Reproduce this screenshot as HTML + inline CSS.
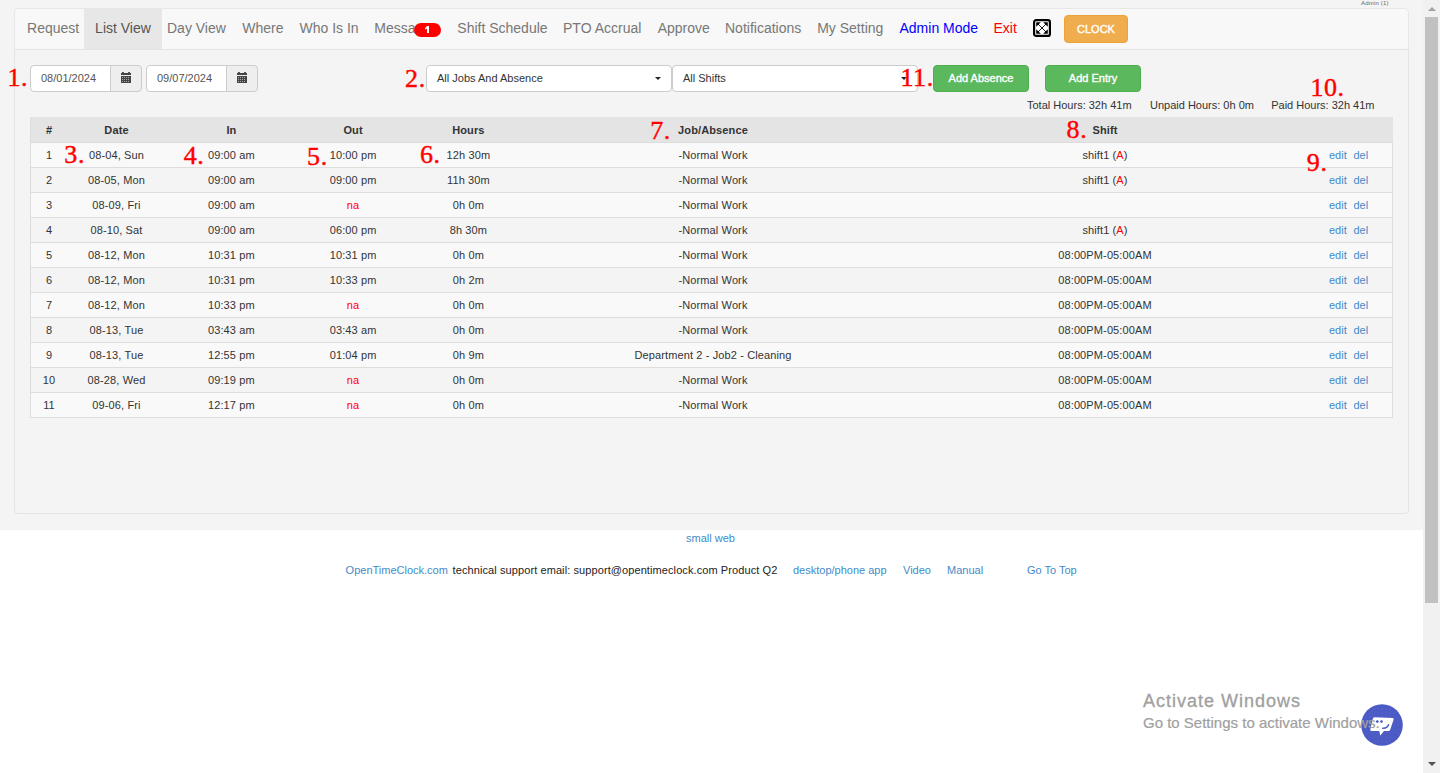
<!DOCTYPE html><html><head><meta charset="utf-8"><style>

html,body{margin:0;padding:0;}
body{width:1440px;height:773px;overflow:hidden;position:relative;background:#fff;font-family:"Liberation Sans", sans-serif;color:#333;}
.abs{position:absolute;white-space:nowrap;}
.gray{position:absolute;left:0;top:0;width:1423px;height:530px;background:#f4f4f4;}
.nav{position:absolute;left:14px;top:8px;width:1393px;height:40px;background:#f8f8f8;border:1px solid #e7e7e7;border-radius:4px 4px 1px 1px;}
.panel{position:absolute;left:14px;top:49px;width:1393px;height:463px;background:#f4f4f4;border:1px solid #e3e3e3;border-radius:2px 2px 4px 4px;}
.nt{position:absolute;top:18px;font-size:14px;line-height:20px;color:#777;white-space:nowrap;}
.t11{position:absolute;font-size:11px;line-height:15px;white-space:nowrap;}
.ann{position:absolute;font-family:"Liberation Serif", serif;font-weight:normal;color:#ff0000;font-size:26px;line-height:26px;letter-spacing:0.6px;white-space:nowrap;-webkit-text-stroke:0.45px #ff0000;text-shadow:0 0 1px #fff,0 0 1px #fff;}
.inp{position:absolute;background:#fff;border:1px solid #ccc;box-sizing:border-box;}
.c{position:absolute;width:300px;text-align:center;font-size:11px;line-height:15px;white-space:nowrap;letter-spacing:0.12px;}

</style></head><body>
<div class="gray"></div>
<div class="abs" style="left:1361px;top:-1px;font-size:6px;line-height:8px;letter-spacing:0.2px;color:#666;">Admin (1)</div>
<div class="nav"></div>
<div class="abs" style="left:84px;top:9px;width:78px;height:40px;background:#e7e7e7;"></div>
<div class="nt" style="left:27.1px;color:#777">Request</div>
<div class="nt" style="left:95.1px;color:#555">List View</div>
<div class="nt" style="left:167.0px;color:#777">Day View</div>
<div class="nt" style="left:242.3px;color:#777">Where</div>
<div class="nt" style="left:299.5px;color:#777">Who Is In</div>
<div class="nt" style="left:374.3px;color:#777">Messa</div>
<div class="nt" style="left:457.3px;color:#777">Shift Schedule</div>
<div class="nt" style="left:563.0px;color:#777">PTO Accrual</div>
<div class="nt" style="left:657.7px;color:#777">Approve</div>
<div class="nt" style="left:725.0px;color:#777">Notifications</div>
<div class="nt" style="left:817.2px;color:#777">My Setting</div>
<div class="nt" style="left:899.5px;color:#0000ff">Admin Mode</div>
<div class="nt" style="left:993.5px;color:#ff0000">Exit</div>
<div class="abs" style="left:414px;top:23px;width:27px;height:14px;border-radius:7px;background:#ff0000;"></div>
<svg class="abs" style="left:424px;top:25px" width="6" height="9" viewBox="0 0 6 9"><rect x="3" y="1" width="2" height="7" fill="#fff"/><path d="M0.9 3.6 L3 1 L3.6 1 L3.6 3 L1.6 4.4 Z" fill="#fff"/></svg>
<svg class="abs" style="left:1032px;top:18px" width="20" height="20" viewBox="0 0 20 20">
<rect x="2.1" y="2.1" width="15.8" height="15.8" rx="2" ry="2" fill="#fff" stroke="#000" stroke-width="2.2"/>
<path d="M4.2 4.2h4.6l-4.6 4.6z M15.8 4.2h-4.6l4.6 4.6z M4.2 15.8h4.6l-4.6-4.6z M15.8 15.8h-4.6l4.6-4.6z" fill="#000"/>
<path d="M5.5 5.5L14.5 14.5M14.5 5.5L5.5 14.5" stroke="#000" stroke-width="0.9"/>
</svg>
<div class="abs" style="left:1064px;top:15px;width:64px;height:28px;box-sizing:border-box;background:#f0ad4e;border:1px solid #eea236;border-radius:4px;color:#fff;font-size:11px;line-height:26px;text-align:center;-webkit-text-stroke:0.35px #fff;">CLOCK</div>
<div class="panel"></div>
<div class="inp" style="left:30px;top:65px;width:81px;height:27px;border-radius:4px 0 0 4px;"></div>
<div class="inp" style="left:110px;top:65px;width:32px;height:27px;background:#eee;border-radius:0 4px 4px 0;"></div>
<div class="t11" style="left:41px;top:71px;color:#555;">08/01/2024</div>
<svg class="abs" style="left:121px;top:72px" width="10" height="11" viewBox="0 0 10 11" shape-rendering="crispEdges"><rect x="1" y="0" width="2" height="1" fill="#555"/><rect x="7" y="0" width="2" height="1" fill="#555"/><rect x="0" y="1" width="10" height="2" fill="#444"/><rect x="0" y="4" width="10" height="7" fill="#444"/><g fill="#a8a8a8"><rect x="1" y="5" width="1" height="1"/><rect x="1" y="7" width="1" height="1"/><rect x="1" y="9" width="1" height="1"/><rect x="3" y="5" width="1" height="1"/><rect x="3" y="7" width="1" height="1"/><rect x="3" y="9" width="1" height="1"/><rect x="5" y="5" width="1" height="1"/><rect x="5" y="7" width="1" height="1"/><rect x="5" y="9" width="1" height="1"/><rect x="7" y="5" width="1" height="1"/><rect x="7" y="7" width="1" height="1"/><rect x="7" y="9" width="1" height="1"/></g></svg>
<div class="inp" style="left:146px;top:65px;width:81px;height:27px;border-radius:4px 0 0 4px;"></div>
<div class="inp" style="left:226px;top:65px;width:32px;height:27px;background:#eee;border-radius:0 4px 4px 0;"></div>
<div class="t11" style="left:157px;top:71px;color:#555;">09/07/2024</div>
<svg class="abs" style="left:237px;top:72px" width="10" height="11" viewBox="0 0 10 11" shape-rendering="crispEdges"><rect x="1" y="0" width="2" height="1" fill="#555"/><rect x="7" y="0" width="2" height="1" fill="#555"/><rect x="0" y="1" width="10" height="2" fill="#444"/><rect x="0" y="4" width="10" height="7" fill="#444"/><g fill="#a8a8a8"><rect x="1" y="5" width="1" height="1"/><rect x="1" y="7" width="1" height="1"/><rect x="1" y="9" width="1" height="1"/><rect x="3" y="5" width="1" height="1"/><rect x="3" y="7" width="1" height="1"/><rect x="3" y="9" width="1" height="1"/><rect x="5" y="5" width="1" height="1"/><rect x="5" y="7" width="1" height="1"/><rect x="5" y="9" width="1" height="1"/><rect x="7" y="5" width="1" height="1"/><rect x="7" y="7" width="1" height="1"/><rect x="7" y="9" width="1" height="1"/></g></svg>
<div class="inp" style="left:426px;top:65px;width:246px;height:27px;border-radius:4px;"></div>
<div class="t11" style="left:437px;top:71px;color:#333;">All Jobs And Absence</div>
<div class="abs" style="left:655px;top:77px;width:0;height:0;border-left:3px solid transparent;border-right:3px solid transparent;border-top:3px solid #222;"></div>
<div class="inp" style="left:672px;top:65px;width:246px;height:27px;border-radius:4px;"></div>
<div class="t11" style="left:683px;top:71px;color:#333;">All Shifts</div>
<div class="abs" style="left:901px;top:77px;width:0;height:0;border-left:3px solid transparent;border-right:3px solid transparent;border-top:3px solid #222;"></div>
<div class="abs" style="left:933px;top:65px;width:96px;height:27px;box-sizing:border-box;background:#5cb85c;border:1px solid #4cae4c;border-radius:4px;color:#fff;font-size:11px;line-height:25px;text-align:center;-webkit-text-stroke:0.35px #fff;">Add Absence</div>
<div class="abs" style="left:1045px;top:65px;width:96px;height:27px;box-sizing:border-box;background:#5cb85c;border:1px solid #4cae4c;border-radius:4px;color:#fff;font-size:11px;line-height:25px;text-align:center;-webkit-text-stroke:0.35px #fff;">Add Entry</div>
<div class="t11" style="left:1027px;top:98px;">Total Hours: 32h 41m</div>
<div class="t11" style="left:1150px;top:98px;">Unpaid Hours: 0h 0m</div>
<div class="t11" style="left:1271.2px;top:98px;">Paid Hours: 32h 41m</div>
<div class="abs" style="left:30px;top:117px;width:1363px;height:25px;background:#e4e4e4;"></div>
<div class="abs" style="left:30px;top:142px;width:1363px;height:25px;box-sizing:border-box;border-top:1px solid #ddd;border-left:1px solid #ddd;border-right:1px solid #ddd;background:#f9f9f9;"></div>
<div class="abs" style="left:30px;top:167px;width:1363px;height:25px;box-sizing:border-box;border-top:1px solid #ddd;border-left:1px solid #ddd;border-right:1px solid #ddd;background:#f4f4f4;"></div>
<div class="abs" style="left:30px;top:192px;width:1363px;height:25px;box-sizing:border-box;border-top:1px solid #ddd;border-left:1px solid #ddd;border-right:1px solid #ddd;background:#f9f9f9;"></div>
<div class="abs" style="left:30px;top:217px;width:1363px;height:25px;box-sizing:border-box;border-top:1px solid #ddd;border-left:1px solid #ddd;border-right:1px solid #ddd;background:#f4f4f4;"></div>
<div class="abs" style="left:30px;top:242px;width:1363px;height:25px;box-sizing:border-box;border-top:1px solid #ddd;border-left:1px solid #ddd;border-right:1px solid #ddd;background:#f9f9f9;"></div>
<div class="abs" style="left:30px;top:267px;width:1363px;height:25px;box-sizing:border-box;border-top:1px solid #ddd;border-left:1px solid #ddd;border-right:1px solid #ddd;background:#f4f4f4;"></div>
<div class="abs" style="left:30px;top:292px;width:1363px;height:25px;box-sizing:border-box;border-top:1px solid #ddd;border-left:1px solid #ddd;border-right:1px solid #ddd;background:#f9f9f9;"></div>
<div class="abs" style="left:30px;top:317px;width:1363px;height:25px;box-sizing:border-box;border-top:1px solid #ddd;border-left:1px solid #ddd;border-right:1px solid #ddd;background:#f4f4f4;"></div>
<div class="abs" style="left:30px;top:342px;width:1363px;height:25px;box-sizing:border-box;border-top:1px solid #ddd;border-left:1px solid #ddd;border-right:1px solid #ddd;background:#f9f9f9;"></div>
<div class="abs" style="left:30px;top:367px;width:1363px;height:25px;box-sizing:border-box;border-top:1px solid #ddd;border-left:1px solid #ddd;border-right:1px solid #ddd;background:#f4f4f4;"></div>
<div class="abs" style="left:30px;top:392px;width:1363px;height:25px;box-sizing:border-box;border-top:1px solid #ddd;border-left:1px solid #ddd;border-right:1px solid #ddd;background:#f9f9f9;"></div>
<div class="abs" style="left:30px;top:417px;width:1363px;height:1px;background:#ddd;"></div>
<div class="abs" style="left:30px;top:117px;width:1px;height:25px;background:#ddd;"></div>
<div class="c" style="left:-101px;top:123px;font-weight:bold;">#</div>
<div class="c" style="left:-33.5px;top:123px;font-weight:bold;">Date</div>
<div class="c" style="left:81.4px;top:123px;font-weight:bold;">In</div>
<div class="c" style="left:203.10000000000002px;top:123px;font-weight:bold;">Out</div>
<div class="c" style="left:318.4px;top:123px;font-weight:bold;">Hours</div>
<div class="c" style="left:563px;top:123px;font-weight:bold;">Job/Absence</div>
<div class="c" style="left:955px;top:123px;font-weight:bold;">Shift</div>
<div class="c" style="left:-101px;top:148px;">1</div>
<div class="c" style="left:-33.5px;top:148px;">08-04, Sun</div>
<div class="c" style="left:81.4px;top:148px;">09:00 am</div>
<div class="c" style="left:203.10000000000002px;top:148px;">10:00 pm</div>
<div class="c" style="left:318.4px;top:148px;">12h 30m</div>
<div class="c" style="left:563px;top:148px;">-Normal Work</div>
<div class="c" style="left:955px;top:148px;">shift1 (<span style="color:#f00">A</span>)</div>
<div class="t11" style="left:1329px;top:148px;color:#428bca;">edit</div>
<div class="t11" style="left:1353.5px;top:148px;color:#428bca;">del</div>
<div class="c" style="left:-101px;top:173px;">2</div>
<div class="c" style="left:-33.5px;top:173px;">08-05, Mon</div>
<div class="c" style="left:81.4px;top:173px;">09:00 am</div>
<div class="c" style="left:203.10000000000002px;top:173px;">09:00 pm</div>
<div class="c" style="left:318.4px;top:173px;">11h 30m</div>
<div class="c" style="left:563px;top:173px;">-Normal Work</div>
<div class="c" style="left:955px;top:173px;">shift1 (<span style="color:#f00">A</span>)</div>
<div class="t11" style="left:1329px;top:173px;color:#428bca;">edit</div>
<div class="t11" style="left:1353.5px;top:173px;color:#428bca;">del</div>
<div class="c" style="left:-101px;top:198px;">3</div>
<div class="c" style="left:-33.5px;top:198px;">08-09, Fri</div>
<div class="c" style="left:81.4px;top:198px;">09:00 am</div>
<div class="c" style="left:203.10000000000002px;top:198px;color:#f00;">na</div>
<div class="c" style="left:318.4px;top:198px;">0h 0m</div>
<div class="c" style="left:563px;top:198px;">-Normal Work</div>
<div class="t11" style="left:1329px;top:198px;color:#428bca;">edit</div>
<div class="t11" style="left:1353.5px;top:198px;color:#428bca;">del</div>
<div class="c" style="left:-101px;top:223px;">4</div>
<div class="c" style="left:-33.5px;top:223px;">08-10, Sat</div>
<div class="c" style="left:81.4px;top:223px;">09:00 am</div>
<div class="c" style="left:203.10000000000002px;top:223px;">06:00 pm</div>
<div class="c" style="left:318.4px;top:223px;">8h 30m</div>
<div class="c" style="left:563px;top:223px;">-Normal Work</div>
<div class="c" style="left:955px;top:223px;">shift1 (<span style="color:#f00">A</span>)</div>
<div class="t11" style="left:1329px;top:223px;color:#428bca;">edit</div>
<div class="t11" style="left:1353.5px;top:223px;color:#428bca;">del</div>
<div class="c" style="left:-101px;top:248px;">5</div>
<div class="c" style="left:-33.5px;top:248px;">08-12, Mon</div>
<div class="c" style="left:81.4px;top:248px;">10:31 pm</div>
<div class="c" style="left:203.10000000000002px;top:248px;">10:31 pm</div>
<div class="c" style="left:318.4px;top:248px;">0h 0m</div>
<div class="c" style="left:563px;top:248px;">-Normal Work</div>
<div class="c" style="left:955px;top:248px;">08:00PM-05:00AM</div>
<div class="t11" style="left:1329px;top:248px;color:#428bca;">edit</div>
<div class="t11" style="left:1353.5px;top:248px;color:#428bca;">del</div>
<div class="c" style="left:-101px;top:273px;">6</div>
<div class="c" style="left:-33.5px;top:273px;">08-12, Mon</div>
<div class="c" style="left:81.4px;top:273px;">10:31 pm</div>
<div class="c" style="left:203.10000000000002px;top:273px;">10:33 pm</div>
<div class="c" style="left:318.4px;top:273px;">0h 2m</div>
<div class="c" style="left:563px;top:273px;">-Normal Work</div>
<div class="c" style="left:955px;top:273px;">08:00PM-05:00AM</div>
<div class="t11" style="left:1329px;top:273px;color:#428bca;">edit</div>
<div class="t11" style="left:1353.5px;top:273px;color:#428bca;">del</div>
<div class="c" style="left:-101px;top:298px;">7</div>
<div class="c" style="left:-33.5px;top:298px;">08-12, Mon</div>
<div class="c" style="left:81.4px;top:298px;">10:33 pm</div>
<div class="c" style="left:203.10000000000002px;top:298px;color:#f00;">na</div>
<div class="c" style="left:318.4px;top:298px;">0h 0m</div>
<div class="c" style="left:563px;top:298px;">-Normal Work</div>
<div class="c" style="left:955px;top:298px;">08:00PM-05:00AM</div>
<div class="t11" style="left:1329px;top:298px;color:#428bca;">edit</div>
<div class="t11" style="left:1353.5px;top:298px;color:#428bca;">del</div>
<div class="c" style="left:-101px;top:323px;">8</div>
<div class="c" style="left:-33.5px;top:323px;">08-13, Tue</div>
<div class="c" style="left:81.4px;top:323px;">03:43 am</div>
<div class="c" style="left:203.10000000000002px;top:323px;">03:43 am</div>
<div class="c" style="left:318.4px;top:323px;">0h 0m</div>
<div class="c" style="left:563px;top:323px;">-Normal Work</div>
<div class="c" style="left:955px;top:323px;">08:00PM-05:00AM</div>
<div class="t11" style="left:1329px;top:323px;color:#428bca;">edit</div>
<div class="t11" style="left:1353.5px;top:323px;color:#428bca;">del</div>
<div class="c" style="left:-101px;top:348px;">9</div>
<div class="c" style="left:-33.5px;top:348px;">08-13, Tue</div>
<div class="c" style="left:81.4px;top:348px;">12:55 pm</div>
<div class="c" style="left:203.10000000000002px;top:348px;">01:04 pm</div>
<div class="c" style="left:318.4px;top:348px;">0h 9m</div>
<div class="c" style="left:563px;top:348px;">Department 2 - Job2 - Cleaning</div>
<div class="c" style="left:955px;top:348px;">08:00PM-05:00AM</div>
<div class="t11" style="left:1329px;top:348px;color:#428bca;">edit</div>
<div class="t11" style="left:1353.5px;top:348px;color:#428bca;">del</div>
<div class="c" style="left:-101px;top:373px;">10</div>
<div class="c" style="left:-33.5px;top:373px;">08-28, Wed</div>
<div class="c" style="left:81.4px;top:373px;">09:19 pm</div>
<div class="c" style="left:203.10000000000002px;top:373px;color:#f00;">na</div>
<div class="c" style="left:318.4px;top:373px;">0h 0m</div>
<div class="c" style="left:563px;top:373px;">-Normal Work</div>
<div class="c" style="left:955px;top:373px;">08:00PM-05:00AM</div>
<div class="t11" style="left:1329px;top:373px;color:#428bca;">edit</div>
<div class="t11" style="left:1353.5px;top:373px;color:#428bca;">del</div>
<div class="c" style="left:-101px;top:398px;">11</div>
<div class="c" style="left:-33.5px;top:398px;">09-06, Fri</div>
<div class="c" style="left:81.4px;top:398px;">12:17 pm</div>
<div class="c" style="left:203.10000000000002px;top:398px;color:#f00;">na</div>
<div class="c" style="left:318.4px;top:398px;">0h 0m</div>
<div class="c" style="left:563px;top:398px;">-Normal Work</div>
<div class="c" style="left:955px;top:398px;">08:00PM-05:00AM</div>
<div class="t11" style="left:1329px;top:398px;color:#428bca;">edit</div>
<div class="t11" style="left:1353.5px;top:398px;color:#428bca;">del</div>
<div class="ann" style="left:7.5px;top:65.2px;">1.</div>
<div class="ann" style="left:405.1px;top:66px;">2.</div>
<div class="ann" style="left:64.3px;top:141.7px;">3.</div>
<div class="ann" style="left:183.7px;top:142.9px;">4.</div>
<div class="ann" style="left:307.1px;top:144px;">5.</div>
<div class="ann" style="left:420px;top:142.3px;">6.</div>
<div class="ann" style="left:650.2px;top:117.9px;">7.</div>
<div class="ann" style="left:1066.6px;top:117px;">8.</div>
<div class="ann" style="left:1306.8px;top:150px;">9.</div>
<div class="ann" style="left:1310.4px;top:74.9px;">10.</div>
<div class="ann" style="left:900.4px;top:64.9px;">11.</div>
<div class="t11" style="left:686px;top:531px;color:#428bca;">small web</div>
<div class="t11" style="left:345.6px;top:563px;color:#428bca;">OpenTimeClock.com</div>
<div class="t11" style="left:452.6px;top:563px;color:#222;letter-spacing:0.09px;">technical support email: support@opentimeclock.com Product Q2</div>
<div class="t11" style="left:793px;top:563px;color:#428bca;">desktop/phone app</div>
<div class="t11" style="left:903px;top:563px;color:#428bca;">Video</div>
<div class="t11" style="left:947px;top:563px;color:#428bca;">Manual</div>
<div class="t11" style="left:1027px;top:563px;color:#428bca;">Go To Top</div>
<svg class="abs" style="left:1361px;top:704px" width="42" height="42" viewBox="0 0 42 42"><circle cx="21" cy="21" r="20.8" fill="#4b5ac4"/><g fill="#6470cc"><circle cx="5" cy="13" r="0.6"/><circle cx="5" cy="17" r="0.6"/><circle cx="5" cy="21" r="0.6"/><circle cx="5" cy="25" r="0.6"/><circle cx="5" cy="29" r="0.6"/><circle cx="9" cy="9" r="0.6"/><circle cx="9" cy="13" r="0.6"/><circle cx="9" cy="17" r="0.6"/><circle cx="9" cy="21" r="0.6"/><circle cx="9" cy="25" r="0.6"/><circle cx="9" cy="29" r="0.6"/><circle cx="9" cy="33" r="0.6"/><circle cx="13" cy="5" r="0.6"/><circle cx="13" cy="9" r="0.6"/><circle cx="13" cy="13" r="0.6"/><circle cx="13" cy="17" r="0.6"/><circle cx="13" cy="21" r="0.6"/><circle cx="13" cy="25" r="0.6"/><circle cx="13" cy="29" r="0.6"/><circle cx="13" cy="33" r="0.6"/><circle cx="13" cy="37" r="0.6"/><circle cx="17" cy="5" r="0.6"/><circle cx="17" cy="9" r="0.6"/><circle cx="17" cy="13" r="0.6"/><circle cx="17" cy="17" r="0.6"/><circle cx="17" cy="21" r="0.6"/><circle cx="17" cy="25" r="0.6"/><circle cx="17" cy="29" r="0.6"/><circle cx="17" cy="33" r="0.6"/><circle cx="17" cy="37" r="0.6"/><circle cx="21" cy="5" r="0.6"/><circle cx="21" cy="9" r="0.6"/><circle cx="21" cy="13" r="0.6"/><circle cx="21" cy="17" r="0.6"/><circle cx="21" cy="21" r="0.6"/><circle cx="21" cy="25" r="0.6"/><circle cx="21" cy="29" r="0.6"/><circle cx="21" cy="33" r="0.6"/><circle cx="21" cy="37" r="0.6"/><circle cx="25" cy="5" r="0.6"/><circle cx="25" cy="9" r="0.6"/><circle cx="25" cy="13" r="0.6"/><circle cx="25" cy="17" r="0.6"/><circle cx="25" cy="21" r="0.6"/><circle cx="25" cy="25" r="0.6"/><circle cx="25" cy="29" r="0.6"/><circle cx="25" cy="33" r="0.6"/><circle cx="25" cy="37" r="0.6"/><circle cx="29" cy="5" r="0.6"/><circle cx="29" cy="9" r="0.6"/><circle cx="29" cy="13" r="0.6"/><circle cx="29" cy="17" r="0.6"/><circle cx="29" cy="21" r="0.6"/><circle cx="29" cy="25" r="0.6"/><circle cx="29" cy="29" r="0.6"/><circle cx="29" cy="33" r="0.6"/><circle cx="29" cy="37" r="0.6"/><circle cx="33" cy="9" r="0.6"/><circle cx="33" cy="13" r="0.6"/><circle cx="33" cy="17" r="0.6"/><circle cx="33" cy="21" r="0.6"/><circle cx="33" cy="25" r="0.6"/><circle cx="33" cy="29" r="0.6"/><circle cx="33" cy="33" r="0.6"/><circle cx="37" cy="13" r="0.6"/><circle cx="37" cy="17" r="0.6"/><circle cx="37" cy="21" r="0.6"/><circle cx="37" cy="25" r="0.6"/><circle cx="37" cy="29" r="0.6"/></g><path d="M13.5 13.3 L31.5 13.9 Q33 14 32.6 15.5 L29.3 25.6 Q28.8 27.1 27.3 27.1 L23 27.1 L19.3 31.6 L18.3 27.1 L10.6 27.1 Q9 27.1 9.3 25.5 L11.8 14.8 Q12.1 13.3 13.5 13.3 Z" fill="#fff"/><circle cx="16.3" cy="17.6" r="1.35" fill="#4b5ac4"/><circle cx="20.5" cy="17.6" r="1.35" fill="#4b5ac4"/><path d="M21.8 24.2 Q26 24.5 27.6 20.8" stroke="#4b5ac4" stroke-width="1.5" fill="none" stroke-linecap="round"/></svg>
<div class="abs" style="left:1143px;top:689px;font-size:18px;line-height:24px;letter-spacing:1px;color:#a0a0a0;-webkit-text-stroke:0.3px #a0a0a0;">Activate Windows</div>
<div class="abs" style="left:1143px;top:714px;font-size:15px;line-height:18px;letter-spacing:0px;color:#a0a0a0;-webkit-text-stroke:0.2px #a0a0a0;">Go to Settings to activate Windows.</div>
<div class="abs" style="left:1423px;top:0;width:17px;height:773px;background:#f1f1f1;"></div>
<div class="abs" style="left:1425px;top:17px;width:13px;height:586px;background:#c1c1c1;"></div>
<div class="abs" style="left:1427.5px;top:7px;width:0;height:0;border-left:4px solid transparent;border-right:4px solid transparent;border-bottom:4px solid #a3a3a3;"></div>
<div class="abs" style="left:1427.5px;top:762px;width:0;height:0;border-left:4px solid transparent;border-right:4px solid transparent;border-top:4px solid #505050;"></div>
</body></html>
